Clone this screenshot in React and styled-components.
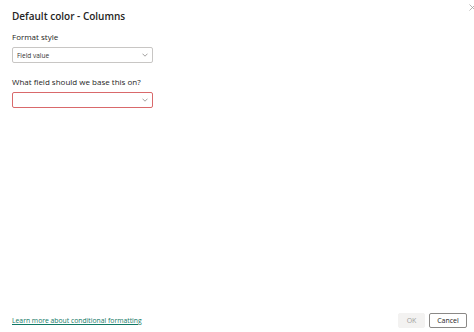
import styled, { createGlobalStyle } from 'styled-components'

const GlobalStyle = createGlobalStyle`
  html, body {
    margin: 0;
    padding: 0;
    background: #fff;
  }
  body {
    font-family: "Open Sans", "Noto Sans", sans-serif;
    color: #252423;
  }
`;

const Dialog = styled.div`
  position: relative;
  width: 474px;
  height: 332px;
  box-sizing: border-box;
  display: flex;
  flex-direction: column;
  overflow: hidden;
  background: #fff;
`;

const CloseButton = styled.button`
  position: absolute;
  top: 1px;
  right: -4px;
  width: 12px;
  height: 12px;
  padding: 0;
  border: none;
  background: none;
  display: flex;
  align-items: center;
  justify-content: center;
`;

const Body = styled.div`
  padding: 9px 12px 0;
  display: flex;
  flex-direction: column;
`;

const Title = styled.h1`
  margin: 0 0 7px;
  font-size: 10px;
  line-height: 15px;
  font-weight: 600;
  color: #252423;
`;

const Field = styled.div`
  display: flex;
  flex-direction: column;
  gap: 5px;
  margin-bottom: 13px;
`;

const Label = styled.label`
  font-size: 8px;
  line-height: 11px;
  color: #252423;
`;

const Select = styled.div`
  width: 141px;
  height: 16px;
  box-sizing: border-box;
  border: 1px solid ${({ $invalid }) => ($invalid ? '#d9696b' : '#c8c6c4')};
  border-radius: 2px;
  display: flex;
  align-items: center;
  justify-content: space-between;
  padding: 0 4px 0 4px;
  font-size: 6.5px;
  color: #323130;
  background: #fff;
`;

const Footer = styled.div`
  margin-top: auto;
  display: flex;
  align-items: center;
  justify-content: space-between;
  padding: 0 7px 4px 12px;
`;

const Link = styled.a`
  font-size: 6.8px;
  color: #117865;
  text-decoration: underline;
  cursor: pointer;
`;

const Actions = styled.div`
  display: flex;
  gap: 4px;
`;

const Button = styled.button`
  height: 15px;
  box-sizing: border-box;
  padding: 0;
  min-width: ${({ $w }) => $w}px;
  font-family: inherit;
  font-size: 7px;
  border-radius: 2px;
  border: 1px solid ${({ $disabled }) => ($disabled ? '#f3f2f1' : '#8a8886')};
  background: ${({ $disabled }) => ($disabled ? '#f3f2f1' : '#fff')};
  color: ${({ $disabled }) => ($disabled ? '#a19f9d' : '#252423')};
`;

function Chevron() {
  return (
    <svg width="6" height="4" viewBox="0 0 6 4">
      <path d="M0.5 0.7 L3 3.2 L5.5 0.7" fill="none" stroke="#8a8886" strokeWidth="0.8" />
    </svg>
  );
}

export default function App() {
  return (
    <Dialog>
      <GlobalStyle />
      <CloseButton aria-label="Close">
        <svg width="7" height="7" viewBox="0 0 7 7">
          <path d="M0.5 0.5 L6.5 6.5 M6.5 0.5 L0.5 6.5" stroke="#a19f9d" strokeWidth="0.8" />
        </svg>
      </CloseButton>
      <Body>
        <Title>Default color - Columns</Title>
        <Field>
          <Label>Format style</Label>
          <Select>
            <span>Field value</span>
            <Chevron />
          </Select>
        </Field>
        <Field>
          <Label>What field should we base this on?</Label>
          <Select $invalid>
            <span />
            <Chevron />
          </Select>
        </Field>
      </Body>
      <Footer>
        <Link>Learn more about conditional formatting</Link>
        <Actions>
          <Button $w={27} $disabled disabled>OK</Button>
          <Button $w={38}>Cancel</Button>
        </Actions>
      </Footer>
    </Dialog>
  );
}
